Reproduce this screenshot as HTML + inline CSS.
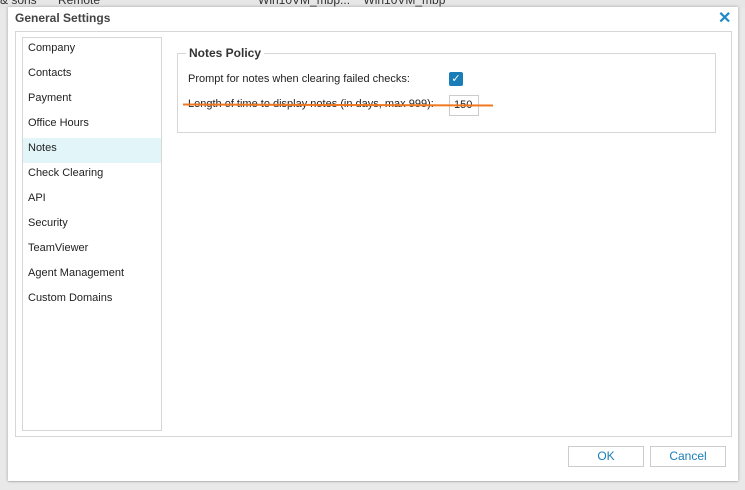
<!DOCTYPE html>
<html><head><style>
body{margin:0;width:745px;height:490px;background:#d4d4d4;font-family:"Liberation Sans",sans-serif;position:relative;overflow:hidden;font-size:12px;color:#222}
.a{position:absolute}
.bg{font-size:12px;color:#333}
</style></head><body>
<div class="a" style="left:0;top:0;width:745px;height:8px;background:#e6e6e6"></div>
<div class="a bg" style="left:0;top:-7px">&amp; sons</div>
<div class="a bg" style="left:58px;top:-7px">Remote</div>
<div class="a bg" style="left:258px;top:-7px">Win10VM_mbp...&nbsp;&nbsp;&nbsp; Win10VM_mbp</div>
<div class="a" style="left:0;top:8px;width:8px;height:475px;background:#e9e9e9"></div>
<div class="a" style="left:738px;top:8px;width:7px;height:475px;background:#e9e9e9"></div>
<div class="a" style="left:0;top:482px;width:745px;height:8px;background:#e9e9e9"></div>
<div class="a" style="left:8px;top:7px;width:730px;height:474px;background:#fff;box-shadow:0 0 3px rgba(0,0,0,.3)"></div>
<div class="a" style="left:15px;top:11px;font-weight:bold;font-size:12px;color:#444">General Settings</div>
<div class="a" style="left:718px;top:8px;font-size:16px;color:#1e88c8;font-weight:bold">✕</div>
<div class="a" style="left:15px;top:31px;width:715px;height:404px;border:1px solid #d6d6d6"></div>
<div class="a" style="left:22px;top:37px;width:138px;height:392px;border:1px solid #d6d6d6"></div>
<div class="a" style="left:23px;top:138px;width:138px;height:25px;background:#e2f6fa"></div>
<div class="a" style="left:28px;top:36px;line-height:25px;font-size:11px">Company<br>Contacts<br>Payment<br>Office Hours<br>Notes<br>Check Clearing<br>API<br>Security<br>TeamViewer<br>Agent Management<br>Custom Domains</div>
<div class="a" style="left:177px;top:53px;width:537px;height:78px;border:1px solid #d6d6d6"></div>
<div class="a" style="left:186px;top:46px;background:#fff;padding:0 3px;font-weight:bold;font-size:12px;color:#333">Notes Policy</div>
<div class="a" style="left:188px;top:73px;font-size:11px">Prompt for notes when clearing failed checks:</div>
<div class="a" style="left:449px;top:72px;width:14px;height:14px;background:#1a7db8;border-radius:2px;color:#fff;font-size:11px;line-height:14px;text-align:center">✓</div>
<div class="a" style="left:188px;top:98px;font-size:11px">Length of time to display notes (in days, max 999):</div>
<div class="a" style="left:449px;top:95px;border:1px solid #ccc;font-size:11px;line-height:19px;padding-left:4px;box-sizing:border-box;width:30px;height:21px">150</div>
<div class="a" style="left:183px;top:104px;width:310px;height:2px;background:#f07820;transform:rotate(0.2deg)"></div>
<div class="a" style="left:568px;top:446px;width:74px;height:19px;border:1px solid #ccc;color:#1a7db8;text-align:center;line-height:19px;font-size:12px">OK</div>
<div class="a" style="left:650px;top:446px;width:74px;height:19px;border:1px solid #ccc;color:#1a7db8;text-align:center;line-height:19px;font-size:12px">Cancel</div>
</body></html>
